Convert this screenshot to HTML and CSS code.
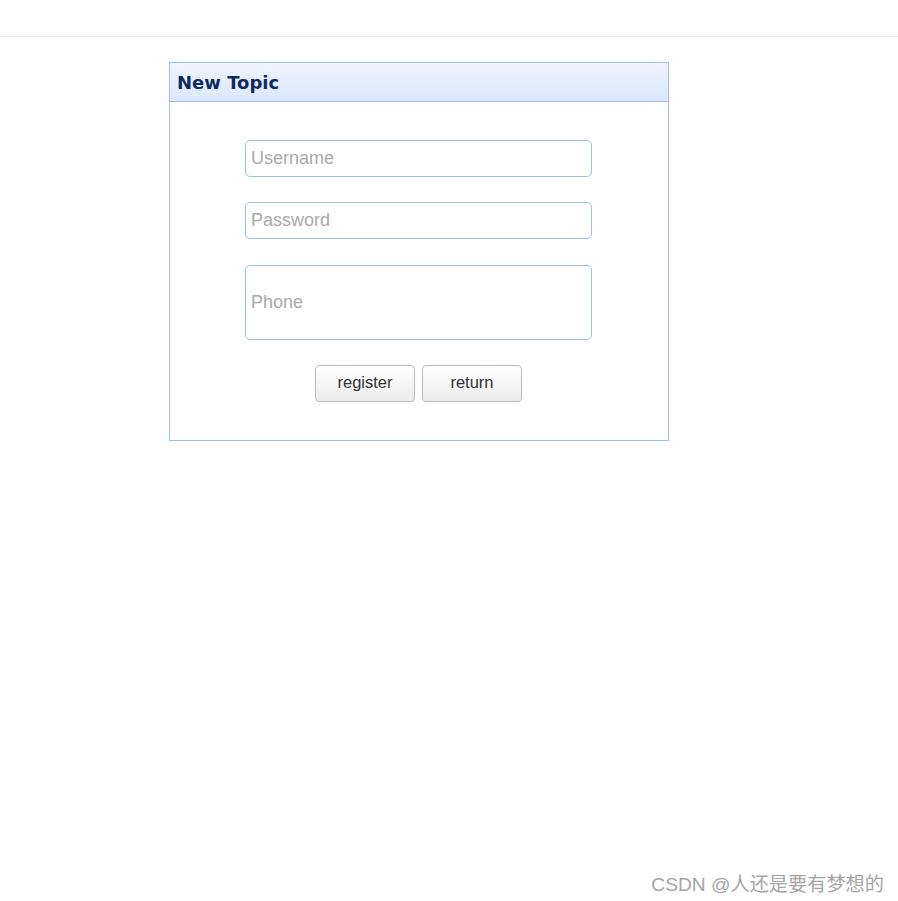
FILE: index.html
```html
<!DOCTYPE html>
<html>
<head>
<meta charset="utf-8">
<link rel="stylesheet" href="styles.css">
</head>
<body>
<div class="topbar"></div>
<div class="panel">
  <div class="panel-head">New Topic</div>
  <form class="panel-body">
    <input class="field" type="text" placeholder="Username">
    <input class="field" type="password" placeholder="Password">
    <textarea class="field area" placeholder="Phone"></textarea>
    <div class="actions">
      <button type="button" class="btn">register</button>
      <button type="button" class="btn">return</button>
    </div>
  </form>
</div>
<div class="watermark">CSDN @人还是要有梦想的</div>
</body>
</html>
```
FILE: styles.css
```css
html, body {
  margin: 0;
  padding: 0;
  background: #fff;
}
body {
  font-family: "Liberation Sans", Arial, sans-serif;
  height: 901px;
  position: relative;
}
.topbar {
  height: 36px;
  border-bottom: 1px solid #ececec;
}
.panel {
  margin: 25px 0 0 169px;
  width: 498px;
  border: 1px solid #9dbdea;
}
.panel-head {
  height: 38px;
  line-height: 40px;
  padding-left: 7px;
  font-family: "DejaVu Sans", Verdana, sans-serif;
  font-weight: bold;
  font-size: 18px;
  color: #0f2a5c;
  background: linear-gradient(#eef5ff, #dbe8fd);
  border-bottom: 1px solid #9dbdea;
}
.panel-body {
  margin: 0;
  padding: 38px 0 38px 75px;
  display: flex;
  flex-direction: column;
  align-items: flex-start;
  gap: 25px;
}
.field {
  box-sizing: border-box;
  width: 347px;
  height: 37px;
  margin: 0;
  padding: 0 5px;
  border: 1px solid #9dbdea;
  border-radius: 5px;
  font-family: "Liberation Sans", Arial, sans-serif;
  font-size: 18px;
  color: #333;
  outline: none;
}
.field::placeholder {
  color: #aaa;
}
.area {
  height: 75px;
  resize: none;
  padding: 25px 5px 0;
  line-height: 22px;
  margin-top: 1px;
}
.actions {
  display: flex;
  gap: 7px;
  margin-left: 70px;
}
.btn {
  box-sizing: border-box;
  width: 100px;
  height: 37px;
  border: 1px solid #bbb;
  border-radius: 4px;
  background: linear-gradient(#ffffff, #ececec);
  font-family: "Liberation Sans", Arial, sans-serif;
  font-size: 16.5px;
  color: #333;
  padding: 0 0 2px;
}
.watermark {
  position: absolute;
  right: 14px;
  top: 869px;
  font-family: "Liberation Sans", "Noto Sans CJK SC", sans-serif;
  font-size: 19.2px;
  color: #a5a5a5;
  white-space: nowrap;
}
```
